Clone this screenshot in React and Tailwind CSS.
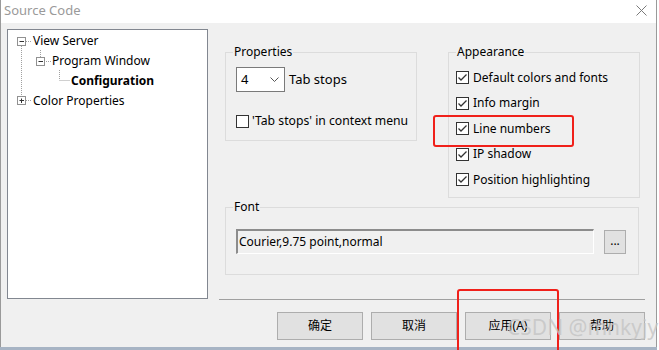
import React from 'react';

const UI = { fontFamily: '"Noto Sans", "Noto Sans CJK SC", sans-serif' };

function Check({ checked }) {
  return (
    <span className="w-[13px] h-[13px] border border-[#333333] bg-white flex-shrink-0 flex items-center justify-center">
      {checked && (
        <svg width="11" height="11" viewBox="0 0 11 11">
          <polyline points="1.5,5.5 4,8 9.5,2.5" fill="none" stroke="#333333" strokeWidth="1.3" />
        </svg>
      )}
    </span>
  );
}

function Group({ label, className, children }) {
  return (
    <div className={`relative border border-[#dcdcdc] ${className}`}>
      <span className="absolute -top-[9px] left-[7px] px-[1px] bg-[#f0f0f0] leading-[16px] text-[12px] text-black">
        {label}
      </span>
      {children}
    </div>
  );
}

function TreeLines() {
  return (
    <svg className="absolute left-0 top-0" width="80" height="80" viewBox="0 0 80 80">
      <g stroke="#a0a0a0" strokeWidth="1" strokeDasharray="1 1" fill="none">
        <line x1="18" y1="11.5" x2="24" y2="11.5" />
        <line x1="13.5" y1="16" x2="13.5" y2="66" />
        <line x1="32.5" y1="20" x2="32.5" y2="27" />
        <line x1="38" y1="31.5" x2="43" y2="31.5" />
        <line x1="51.5" y1="40" x2="51.5" y2="50" />
        <line x1="51.5" y1="50.5" x2="62" y2="50.5" />
        <line x1="18" y1="70.5" x2="24" y2="70.5" />
      </g>
      <g stroke="#919191" strokeWidth="1" fill="#ffffff">
        <rect x="9.5" y="7.5" width="8" height="8" />
        <rect x="28.5" y="27.5" width="8" height="8" />
        <rect x="9.5" y="66.5" width="8" height="8" />
      </g>
      <g stroke="#333333" strokeWidth="1">
        <line x1="11.5" y1="11.5" x2="16" y2="11.5" />
        <line x1="30.5" y1="31.5" x2="35" y2="31.5" />
        <line x1="11.5" y1="70.5" x2="16" y2="70.5" />
        <line x1="13.5" y1="68.5" x2="13.5" y2="73" />
      </g>
    </svg>
  );
}

const APPEARANCE = ['Default colors and fonts', 'Info margin', 'Line numbers', 'IP shadow', 'Position highlighting'];

export default function App() {
  return (
    <div className="w-[659px] h-[350px] bg-white relative overflow-hidden text-[12px] text-black" style={UI}>
      <div className="w-[657px] h-[347px] flex flex-col border-l border-r border-[#9a9a9a]">
        {/* title bar */}
        <div className="h-[23px] bg-white flex items-center flex-shrink-0">
          <span className="pl-[3px] text-[13px] leading-[20px] text-[#9a9a9a] -mt-[3px]">Source Code</span>
          <svg className="ml-auto mr-[9px] -mt-[2px]" width="11" height="11" viewBox="0 0 11 11">
            <path d="M0.5 0.5 L10.5 10.5 M10.5 0.5 L0.5 10.5" stroke="#7a7a7a" strokeWidth="1" />
          </svg>
        </div>

        {/* body */}
        <div className="flex-1 bg-[#f0f0f0] flex">
          {/* tree */}
          <div className="ml-[6px] mt-[6px] w-[201px] h-[270px] bg-white border border-[#828790] relative flex-shrink-0">
            <TreeLines />
            <div className="flex flex-col pt-[1px]">
              <div className="h-[20px] leading-[20px] pl-[25px]">View Server</div>
              <div className="h-[20px] leading-[20px] pl-[44px]">Program Window</div>
              <div className="h-[20px] leading-[20px] pl-[63px] font-bold">Configuration</div>
              <div className="h-[20px] leading-[20px] pl-[25px]">Color Properties</div>
            </div>
          </div>

          {/* right side */}
          <div className="ml-[11px] w-[426px] flex flex-col">
            <div className="mt-[29px] pl-[6px] flex items-start">
              <Group label="Properties" className="w-[192px] h-[89px] pl-[10px] pt-[14px]">
                <div className="flex items-center">
                  <div className="w-[49px] h-[25px] bg-white border border-[#7a7a7a] flex items-center pl-[4px] pr-[5px]">
                    <span className="text-[13px]">4</span>
                    <svg className="ml-auto" width="9" height="6" viewBox="0 0 9 6">
                      <polyline points="0.5,0.5 4.5,4.5 8.5,0.5" fill="none" stroke="#555555" strokeWidth="1" />
                    </svg>
                  </div>
                  <span className="ml-[4px] text-[13px]">Tab stops</span>
                </div>
                <div className="mt-[20px] flex items-center">
                  <Check checked={false} />
                  <span className="ml-[3px] whitespace-nowrap text-[12.2px]">'Tab stops' in context menu</span>
                </div>
              </Group>

              <Group label="Appearance" className="ml-[31px] w-[192px] h-[146px] pl-[7px] pt-[12px]">
                {APPEARANCE.map((item) => (
                  <div key={item} className="h-[25.5px] w-[153px] flex items-center overflow-hidden whitespace-nowrap">
                    <Check checked />
                    <span className="ml-[4px]">{item}</span>
                  </div>
                ))}
              </Group>
            </div>

            <Group label="Font" className="mt-[9px] ml-[6px] w-[414px] h-[68px] pl-[10px] pt-[21px]">
              <div className="flex items-center">
                <div className="w-[358px] h-[25px] bg-[#f0f0f0] border-t-2 border-l-2 border-t-[#8c8c8c] border-l-[#8c8c8c] border-b border-r border-b-white border-r-white flex items-center pl-[1px]">
                  Courier,9.75 point,normal
                </div>
                <div className="ml-[10px] w-[22px] h-[24px] bg-[#e1e1e1] border border-[#adadad] flex items-center justify-center leading-none pb-[2px]">
                  ...
                </div>
              </div>
            </Group>

            <div className="mt-[24px] h-px bg-[#a0a0a0]" />

            <div className="mt-[12px] flex justify-end gap-[8px]">
              {['确定', '取消', '应用(A)', '帮助'].map((b) => (
                <div key={b} className="w-[86px] h-[28px] bg-[#e1e1e1] border border-[#adadad] flex items-center justify-center">
                  {b}
                </div>
              ))}
            </div>
          </div>
        </div>
      </div>
      <div className="h-[3px] w-[657px] bg-[#a7b4c4]" />

      {/* annotation overlays */}
      <div className="absolute left-[433px] top-[115px] w-[141px] h-[32px] border-2 border-[#f0201a] rounded-[3px]" />
      <div className="absolute left-[457px] top-[289px] w-[102px] h-[70px] border-2 border-[#f0201a] rounded-[3px]" />
      <div className="absolute left-[507px] top-[313px] text-[21px] leading-[28px] text-[#c4c4c4]/80 whitespace-nowrap">
        CSDN @mnkyjy
      </div>
    </div>
  );
}
